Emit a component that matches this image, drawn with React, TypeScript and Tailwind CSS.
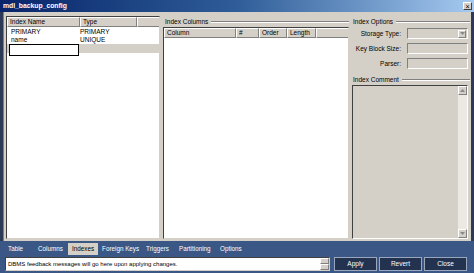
import React from "react";

const F = { fontFamily: '"Liberation Sans", Arial, sans-serif' };

function Header({ cells }: { cells: { label: string; w: number }[] }) {
  return (
    <div className="flex h-[10px] shrink-0 bg-[#d4d0c8]">
      {cells.map((c, i) => (
        <div
          key={i}
          className="h-full border-t border-l border-t-white border-l-white border-r border-b border-r-[#808080] border-b-[#808080] pl-[2px] leading-[8px] text-[6.5px] text-black overflow-hidden whitespace-nowrap"
          style={{ width: c.w }}
        >
          {c.label}
        </div>
      ))}
      <div className="flex-1 h-full border-t border-l border-t-white border-l-white border-b border-b-[#808080]" />
    </div>
  );
}

function Field({ combo }: { combo?: boolean }) {
  return (
    <div className="w-[61px] h-[11px] border border-t-[#808080] border-l-[#808080] border-r-white border-b-white bg-[#d4d0c8] flex justify-end items-center pr-[1px]">
      {combo && (
        <div className="w-[8px] h-[8px] bg-[#d4d0c8] border border-t-white border-l-white border-r-[#808080] border-b-[#808080] flex items-center justify-center">
          <svg width="5" height="3" viewBox="0 0 5 3"><path d="M0 0h5L2.5 3z" fill="#888" /></svg>
        </div>
      )}
    </div>
  );
}

export default function App() {
  return (
    <div className="w-[474px] h-[273px] flex flex-col overflow-hidden bg-[#2c3a56]" style={F}>
      {/* Title bar */}
      <div className="h-[12px] shrink-0 flex items-center justify-between pl-[3px] pr-[2px] bg-gradient-to-r from-[#0a246a] via-[#2f5d98] to-[#a6caf0]">
        <span className="text-white font-bold text-[6.8px] leading-none">mdl_backup_config</span>
        <div className="w-[9px] h-[8px] bg-[#d4d0c8] border border-t-white border-l-white border-r-[#404040] border-b-[#404040] flex items-center justify-center text-[7px] leading-none text-black">
          ×
        </div>
      </div>
      {/* Body */}
      <div className="h-[229px] shrink-0 flex px-[3px] bg-[#2c3a56]">
        <div className="flex-1 flex bg-[#d4d0c8] pt-[4px] pb-[2px] pl-[2px] pr-[1px] border-l border-[#808080]">
          {/* Left list */}
          <div className="w-[154px] flex flex-col bg-white border border-t-[#404040] border-l-[#404040] border-r-[#d4d0c8] border-b-[#d4d0c8]">
            <Header cells={[{ label: "Index Name", w: 73 }, { label: "Type", w: 57 }]} />
            <div className="flex flex-col text-[6.5px] text-black">
              <div className="flex h-[8px] items-center mt-[1px]">
                <span className="w-[73px] pl-[4px]">PRIMARY</span>
                <span>PRIMARY</span>
              </div>
              <div className="flex h-[8px] items-center">
                <span className="w-[73px] pl-[4px]">name</span>
                <span>UNIQUE</span>
              </div>
              <div className="flex h-[9px] bg-[#d4d0c8] items-start">
                <div className="w-[70px] h-[12px] ml-[2px] bg-white border border-black" />
              </div>
            </div>
          </div>
          {/* Splitter */}
          <div className="w-[3px]" />
          {/* Middle */}
          <div className="w-[186px] flex flex-col pt-[1px]">
            <div className="h-[9px] flex items-center text-[6.5px] text-black pl-[2px] gap-[3px]">
              <span>Index Columns</span>
              <div className="flex-1 h-[2px] border-t border-b border-t-[#808080] border-b-white" />
            </div>
            <div className="flex-1 mt-[1px] flex flex-col bg-white border border-t-[#404040] border-l-[#404040] border-r-[#d4d0c8] border-b-[#d4d0c8]">
              <Header
                cells={[
                  { label: "Column", w: 72 },
                  { label: "#", w: 23 },
                  { label: "Order", w: 28 },
                  { label: "Length", w: 29 },
                ]}
              />
            </div>
          </div>
          {/* Right */}
          <div className="flex-1 flex flex-col pl-[3px] pt-[1px]">
            <div className="h-[9px] flex items-center text-[6.5px] text-black pl-[1px] gap-[3px]">
              <span>Index Options</span>
              <div className="flex-1 h-[2px] border-t border-b border-t-[#808080] border-b-white" />
            </div>
            <div className="flex flex-col gap-[4px] mt-[2px] text-[6.5px] text-black">
              <div className="flex items-center justify-end gap-[6px] pr-[2px]">
                <span>Storage Type:</span>
                <Field combo />
              </div>
              <div className="flex items-center justify-end gap-[6px] pr-[2px]">
                <span>Key Block Size:</span>
                <Field />
              </div>
              <div className="flex items-center justify-end gap-[6px] pr-[2px]">
                <span>Parser:</span>
                <Field />
              </div>
            </div>
            <div className="h-[9px] mt-[6px] flex items-center text-[6.5px] text-black pl-[1px] gap-[3px]">
              <span>Index Comment</span>
              <div className="flex-1 h-[2px] border-t border-b border-t-[#808080] border-b-white" />
            </div>
            <div className="flex-1 mt-[1px] mr-[2px] flex bg-[#d4d0c8] border border-t-[#404040] border-l-[#404040] border-r-white border-b-white">
              <div className="flex-1" />
              <div className="w-[9px] flex flex-col bg-[#ece9e4]">
                <div className="h-[9px] bg-[#d4d0c8] border border-t-white border-l-white border-r-[#808080] border-b-[#808080] flex items-center justify-center">
                  <svg width="5" height="3" viewBox="0 0 5 3"><path d="M0 3h5L2.5 0z" fill="#888" /></svg>
                </div>
                <div className="flex-1" />
                <div className="h-[9px] bg-[#d4d0c8] border border-t-white border-l-white border-r-[#808080] border-b-[#808080] flex items-center justify-center">
                  <svg width="5" height="3" viewBox="0 0 5 3"><path d="M0 0h5L2.5 3z" fill="#888" /></svg>
                </div>
              </div>
            </div>
          </div>
        </div>
      </div>
      {/* Bottom band */}
      <div className="flex-1 flex flex-col bg-[#3b5785] px-[3px]">
        <div className="h-[14px] flex items-end text-[6.3px] text-white whitespace-nowrap">
          <div className="flex h-[12px] items-center">
            <span className="pl-[5px] w-[35px] shrink-0">Table</span>
            <span className="w-[30px] shrink-0">Columns</span>
            <span className="px-[4px] h-full flex items-center bg-[#d4d0c8] text-black shrink-0">Indexes</span>
            <span className="pl-[4px] w-[48px] shrink-0">Foreign Keys</span>
            <span className="w-[33px] shrink-0">Triggers</span>
            <span className="w-[41px] shrink-0">Partitioning</span>
            <span className="shrink-0">Options</span>
          </div>
        </div>
        <div className="flex items-center mt-[2px] pl-[2px] gap-[3px]">
          <div className="w-[325px] h-[14px] bg-white border border-t-[#404040] border-l-[#404040] border-r-[#d4d0c8] border-b-[#d4d0c8] flex">
            <div className="flex-1 text-[6px] leading-[12px] pl-[2px] text-black whitespace-nowrap">
              DBMS feedback messages will go here upon applying changes.
            </div>
            <div className="w-[9px] flex flex-col">
              <div className="h-[6px] bg-[#d4d0c8] border border-t-white border-l-white border-r-[#808080] border-b-[#808080]" />
              <div className="h-[6px] bg-[#d4d0c8] border border-t-white border-l-white border-r-[#808080] border-b-[#808080]" />
            </div>
          </div>
          <div className="flex gap-[2px] ml-[1px]">
            {["Apply", "Revert", "Close"].map((b) => (
              <div
                key={b}
                className="w-[43px] h-[14px] bg-[#22324f] border border-[#9aa6bd] text-white text-[6.5px] flex items-center justify-center"
              >
                {b}
              </div>
            ))}
          </div>
        </div>
      </div>
    </div>
  );
}
